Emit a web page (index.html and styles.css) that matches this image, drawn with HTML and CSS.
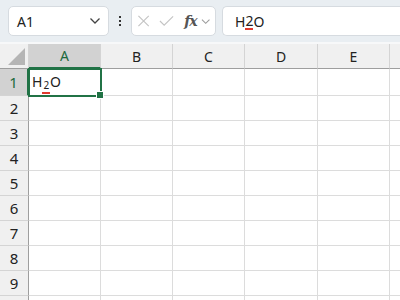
FILE: index.html
```html
<!doctype html>
<html lang="ja">
  <head>
    <meta charset="UTF-8" />
    <title>Sheet</title>
    <link rel="stylesheet" href="styles.css">
  </head>
  <body>
    <div class="toolbar">
      <div class="name-box">
        <span>A1</span>
        <svg class="chev" width="12" height="8" viewBox="0 0 12 8"><path d="M1.5 1.5 L6 6 L10.5 1.5" fill="none" stroke="#444" stroke-width="1.3"/></svg>
      </div>
      <div class="dots"><i></i><i></i><i></i></div>
      <div class="fx-box">
        <svg width="14" height="14" viewBox="0 0 14 14"><path d="M1.5 1.5 L12.5 12.5 M12.5 1.5 L1.5 12.5" stroke="#c4c4c4" stroke-width="1.2"/></svg>
        <svg width="16" height="14" viewBox="0 0 16 14"><path d="M1 7 L5.5 11.5 L15 2" fill="none" stroke="#c4c4c4" stroke-width="1.2"/></svg>
        <span class="fx">fx</span>
        <svg width="10" height="7" viewBox="0 0 10 7"><path d="M1 1.5 L5 5.5 L9 1.5" fill="none" stroke="#9a9a9a" stroke-width="1.1"/></svg>
      </div>
      <div class="formula">H<u>2</u>O</div>
    </div>
    <div class="sheet">
      <div class="corner"><span class="tri"></span></div>
      <div class="col sel">A</div>
      <div class="col">B</div>
      <div class="col">C</div>
      <div class="col">D</div>
      <div class="col">E</div>
      <div class="col rest"></div>

      <div class="row sel">1</div>
      <div class="cell active">H<sub>2</sub>O<span class="handle"></span></div>
      <div class="cell"></div><div class="cell"></div><div class="cell"></div><div class="cell"></div><div class="cell rest"></div>

      <div class="row">2</div>
      <div class="cell"></div><div class="cell"></div><div class="cell"></div><div class="cell"></div><div class="cell"></div><div class="cell rest"></div>
      <div class="row">3</div>
      <div class="cell"></div><div class="cell"></div><div class="cell"></div><div class="cell"></div><div class="cell"></div><div class="cell rest"></div>
      <div class="row">4</div>
      <div class="cell"></div><div class="cell"></div><div class="cell"></div><div class="cell"></div><div class="cell"></div><div class="cell rest"></div>
      <div class="row">5</div>
      <div class="cell"></div><div class="cell"></div><div class="cell"></div><div class="cell"></div><div class="cell"></div><div class="cell rest"></div>
      <div class="row">6</div>
      <div class="cell"></div><div class="cell"></div><div class="cell"></div><div class="cell"></div><div class="cell"></div><div class="cell rest"></div>
      <div class="row">7</div>
      <div class="cell"></div><div class="cell"></div><div class="cell"></div><div class="cell"></div><div class="cell"></div><div class="cell rest"></div>
      <div class="row">8</div>
      <div class="cell"></div><div class="cell"></div><div class="cell"></div><div class="cell"></div><div class="cell"></div><div class="cell rest"></div>
      <div class="row">9</div>
      <div class="cell"></div><div class="cell"></div><div class="cell"></div><div class="cell"></div><div class="cell"></div><div class="cell rest"></div>
      <div class="row"></div>
      <div class="cell"></div><div class="cell"></div><div class="cell"></div><div class="cell"></div><div class="cell"></div><div class="cell rest"></div>
    </div>
  </body>
</html>
```

FILE: styles.css
```css
body {
  margin: 0;
  width: 400px;
  height: 300px;
  overflow: hidden;
  font-family: "Noto Sans", "Noto Sans CJK JP", sans-serif;
  background: #fff;
  color: #222;
}
.toolbar {
  height: 42px;
  background: #e9eef2;
  display: flex;
  align-items: center;
  padding: 0 0 0 8px;
  border-bottom: 2px solid #f7f8f9;
}
.name-box,
.fx-box,
.formula {
  height: 30px;
  box-sizing: border-box;
  background: #fff;
  border: 1px solid #d6dbe0;
  border-radius: 5px;
  display: flex;
  align-items: center;
}
.name-box {
  width: 101px;
  padding: 0 7px 0 8px;
  justify-content: space-between;
  font-size: 14px;
}
.dots {
  width: 22px;
  display: flex;
  flex-direction: column;
  align-items: center;
  gap: 2px;
}
.dots i {
  width: 2px;
  height: 2px;
  background: #333;
}
.fx-box {
  width: 85px;
  padding: 0 5px 0 5px;
  gap: 8px;
}
.fx-box svg:nth-child(2) {
  margin-left: 1px;
}
.fx {
  font-family: "DejaVu Serif", serif;
  font-style: italic;
  font-weight: bold;
  font-size: 14px;
  color: #555;
  letter-spacing: -1px;
  margin-left: 2px;
  margin-right: -4px;
}
.formula {
  margin-left: 6px;
  flex: 1;
  border-right: none;
  border-radius: 5px 0 0 5px;
  padding-left: 12px;
  font-size: 14px;
}
.formula u {
  text-decoration: none;
  border-bottom: 2px solid #e03a2e;
  line-height: 15px;
}
.sheet {
  display: grid;
  grid-template-columns: 29px 72px 72px 72px 73px 72px 1fr;
  grid-template-rows: 25px 27px repeat(9, 25px);
  font-size: 14px;
}
.sheet > div {
  box-sizing: border-box;
}
.corner {
  background: #f0f0f0;
  border-right: 1px solid #d4d4d4;
  border-bottom: 1px solid #9e9e9e;
  position: relative;
}
.tri {
  position: absolute;
  right: 3px;
  bottom: 3px;
  width: 0;
  height: 0;
  border-left: 17px solid transparent;
  border-bottom: 17px solid #b5b5b5;
}
.col {
  background: #f0f0f0;
  border-right: 1px solid #d4d4d4;
  border-bottom: 1px solid #9e9e9e;
  display: flex;
  align-items: center;
  justify-content: center;
  color: #222;
}
.col.sel {
  background: #d2d2d2;
  color: #1c6a3e;
  border-bottom: 2px solid #217346;
}
.col.rest,
.cell.rest {
  border-right: none;
}
.row {
  background: #f0f0f0;
  border-right: 1px solid #9e9e9e;
  border-bottom: 1px solid #d4d4d4;
  display: flex;
  align-items: center;
  justify-content: center;
  font-size: 15px;
  color: #222;
}
.row.sel {
  background: #d2d2d2;
  color: #1c6a3e;
  border-right: 2px solid #217346;
}
.cell {
  border-right: 1px solid #dcdcdc;
  border-bottom: 1px solid #dcdcdc;
}
.cell.active {
  position: relative;
  outline: 2px solid #217346;
  outline-offset: -1px;
  padding: 4px 0 0 3px;
  font-size: 14px;
  line-height: 18px;
}
.cell.active sub {
  font-size: 10px;
  vertical-align: -2px;
  line-height: 0;
  border-bottom: 2px solid #e03a2e;
  padding: 0 1px;
}
.handle {
  position: absolute;
  right: -4px;
  bottom: -4px;
  width: 6px;
  height: 6px;
  background: #217346;
  border: 1px solid #fff;
}
```
